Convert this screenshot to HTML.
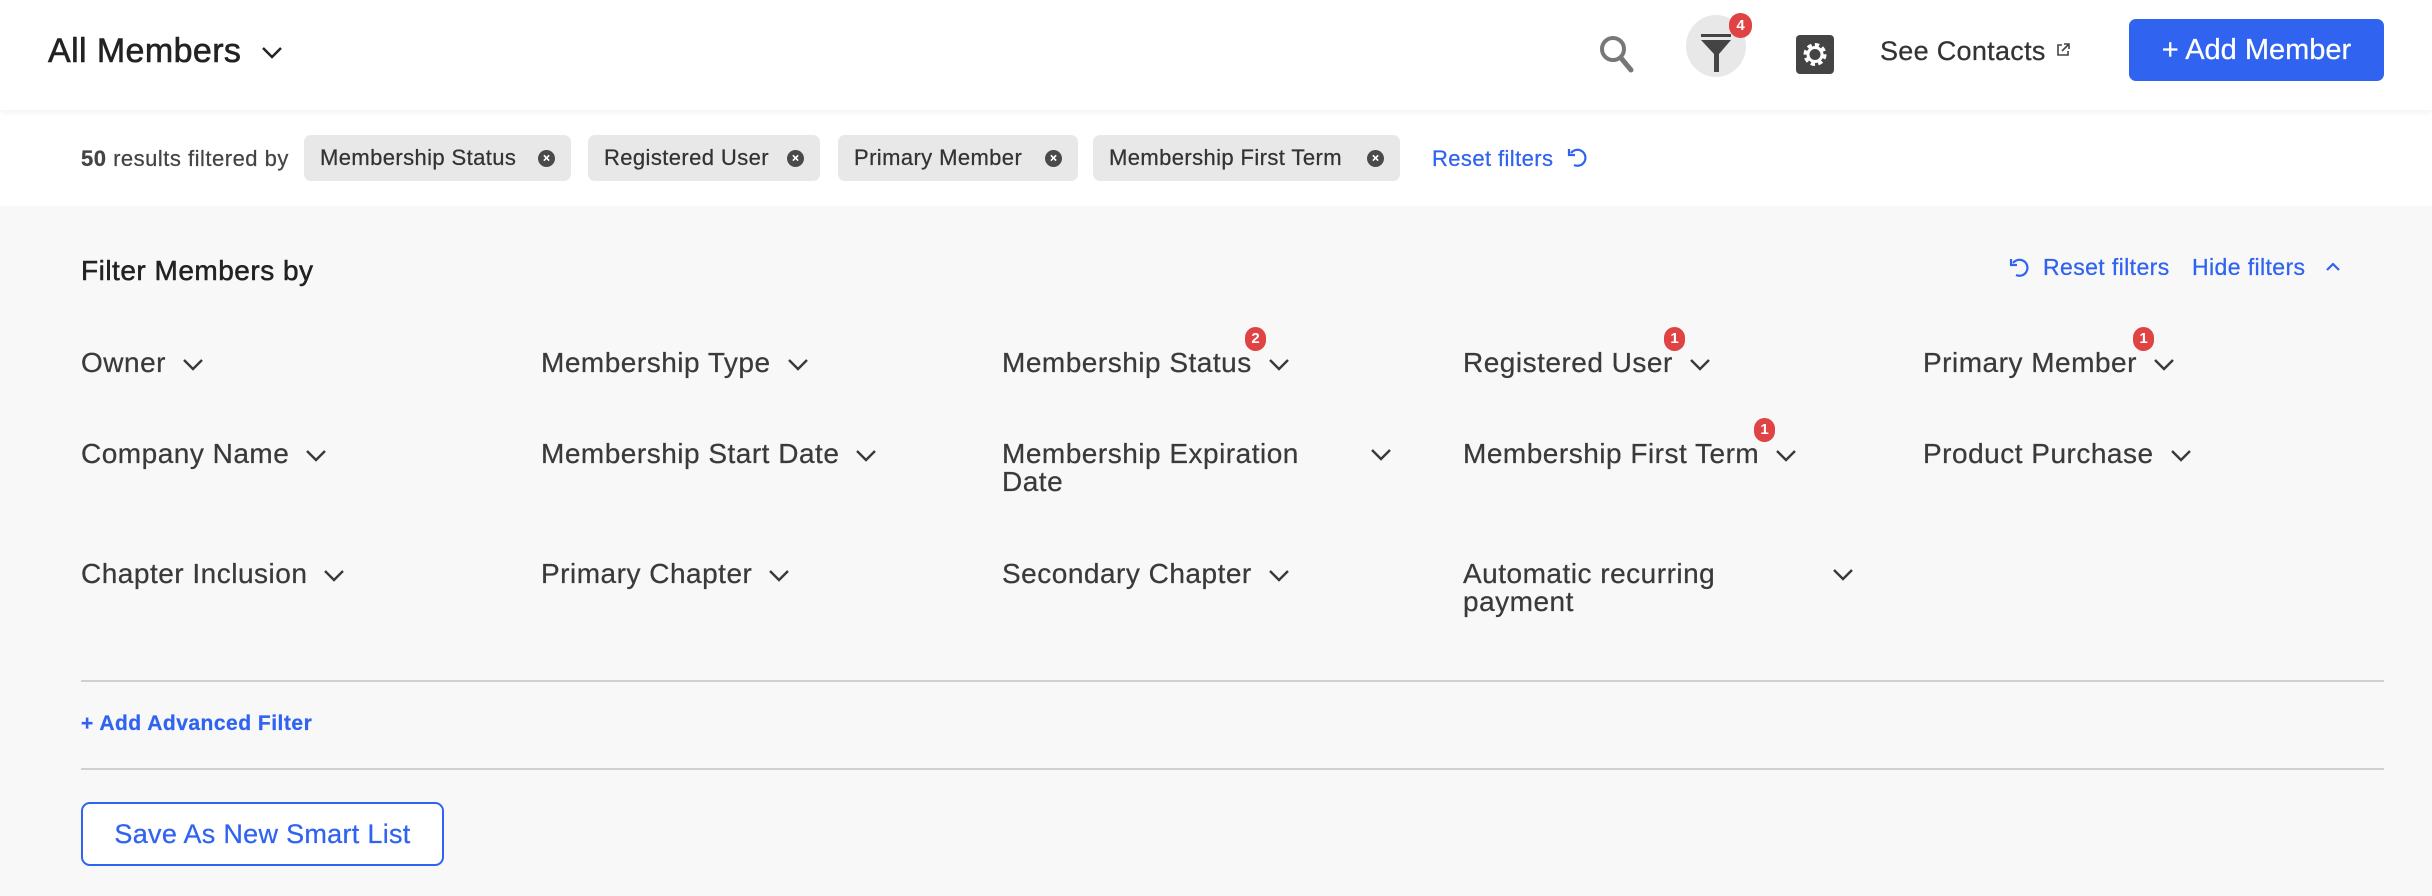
<!DOCTYPE html>
<html><head><meta charset="utf-8"><style>
*{box-sizing:border-box;margin:0;padding:0}
body{width:2432px;height:896px;overflow:hidden;background:#f8f8f8;font-family:"Liberation Sans",sans-serif;position:relative;color:#333;-webkit-text-stroke:0.25px}
.top{position:absolute;left:0;top:0;width:2432px;height:110px;background:#fff;box-shadow:0 2px 6px rgba(0,0,0,.06);z-index:2}
.sub{position:absolute;left:0;top:110px;width:2432px;height:96px;background:#fff}
.a{position:absolute;white-space:nowrap}
.chip{position:absolute;top:135px;height:46px;background:#e8e8e8;border-radius:7px;font-size:22px;letter-spacing:0.4px;color:#333;display:flex;align-items:center;padding-left:16px}
.x{position:absolute;right:16px;top:15px;width:17px;height:17px;border-radius:50%;background:#4a4a4a;color:#fff;font-size:12px;line-height:17px;text-align:center;font-weight:bold;letter-spacing:0}
.lbl{position:absolute;font-size:28px;letter-spacing:0.5px;color:#3a3a3a;line-height:28px}
.chev{display:inline-block;vertical-align:middle;margin-left:16px}
.bd{position:absolute;width:21px;height:24px;border-radius:12px;background:#e04343;color:#fff;font-size:15px;font-weight:bold;text-align:center;line-height:24px;-webkit-text-stroke:0}
.blue{color:#2f63f0}
</style></head><body>
<div class="top">
 <div class="a" style="left:48px;top:32px;font-size:34px;letter-spacing:0.4px;color:#222;-webkit-text-stroke:0.6px">All Members</div>
 <svg class="a" style="left:260px;top:45px" width="24" height="16" viewBox="0 0 24 16"><polyline points="3,3 12,12 21,3" fill="none" stroke="#222" stroke-width="2.5"/></svg>
 <svg class="a" style="left:1598px;top:34px" width="38" height="40" viewBox="0 0 38 40"><circle cx="15" cy="15" r="11" fill="none" stroke="#777" stroke-width="4"/><line x1="23" y1="24" x2="33" y2="36" stroke="#777" stroke-width="5" stroke-linecap="round"/></svg>
 <div class="a" style="left:1686px;top:15px;width:60px;height:62px;border-radius:50%;background:#e8e8e8"></div>
 <svg class="a" style="left:1699px;top:32px" width="34" height="42" viewBox="0 0 34 42"><rect x="2" y="2" width="30" height="3" fill="#444"/><path d="M2 8 H32 L20 22 V40 L15 40 V22 Z" fill="#444"/></svg>
 <div class="bd" style="left:1729px;top:13px;width:23px;height:25px;line-height:25px;border-radius:12px">4</div>
 <svg class="a" style="left:1796px;top:35px" width="38" height="39" viewBox="0 0 38 39"><rect x="0" y="0" width="38" height="39" rx="4" fill="#444"/><circle cx="19" cy="19.5" r="9" fill="none" stroke="#fff" stroke-width="5" stroke-dasharray="4 3"/><circle cx="19" cy="19.5" r="7" fill="none" stroke="#fff" stroke-width="3"/></svg>
 <div class="a" style="left:1880px;top:36px;font-size:27px;letter-spacing:0.3px;color:#333">See Contacts</div>
 <svg class="a" style="left:2055px;top:42px" width="16" height="16" viewBox="0 0 16 16"><path d="M7 3H3v10h10V9M9 2h5v5M14 2 7 9" fill="none" stroke="#444" stroke-width="1.6"/></svg>
 <div class="a" style="left:2129px;top:19px;width:255px;height:62px;background:#2f63f0;border-radius:7px;color:#fff;font-size:29px;text-align:center;line-height:62px">+ Add Member</div>
</div>
<div class="sub">
 <div class="a" style="left:81px;top:36px;font-size:22px;letter-spacing:0.5px;color:#444"><b>50</b> results filtered by</div>
 <div class="a blue" style="left:1432px;top:36px;font-size:22px;letter-spacing:0.4px">Reset filters</div>
 <svg class="a" style="left:1566px;top:36px" width="24" height="24" viewBox="0 0 24 24"><path d="M5 7 A8 8 0 1 1 8 19" fill="none" stroke="#2f63f0" stroke-width="2.2"/><path d="M3 3 V9 H9" fill="none" stroke="#2f63f0" stroke-width="2.2"/></svg>
</div>
<div class="chip" style="left:304px;width:267px">Membership Status<span class="x">×</span></div>
<div class="chip" style="left:588px;width:232px">Registered User<span class="x">×</span></div>
<div class="chip" style="left:838px;width:240px">Primary Member<span class="x">×</span></div>
<div class="chip" style="left:1093px;width:307px">Membership First Term<span class="x">×</span></div>

<div class="a" style="left:81px;top:255px;font-size:28px;letter-spacing:0.5px;color:#222;-webkit-text-stroke:0.5px">Filter Members by</div>
<svg class="a" style="left:2008px;top:256px" width="24" height="24" viewBox="0 0 24 24"><path d="M5 7 A8 8 0 1 1 8 19" fill="none" stroke="#2f63f0" stroke-width="2.2"/><path d="M3 3 V9 H9" fill="none" stroke="#2f63f0" stroke-width="2.2"/></svg>
<div class="a blue" style="left:2043px;top:254px;font-size:23px;letter-spacing:0.4px">Reset filters</div>
<div class="a blue" style="left:2192px;top:254px;font-size:23px;letter-spacing:0.4px">Hide filters</div>
<svg class="a" style="left:2324px;top:260px" width="18" height="14" viewBox="0 0 18 14"><polyline points="3,10 9,4 15,10" fill="none" stroke="#2f63f0" stroke-width="2.2"/></svg>

<!-- row 1 -->
<div class="lbl" style="left:81px;top:349px">Owner<svg class="chev" width="22" height="14" viewBox="0 0 22 14"><polyline points="2,2 11,11 20,2" fill="none" stroke="#3a3a3a" stroke-width="2.4"/></svg></div>
<div class="lbl" style="left:541px;top:349px">Membership Type<svg class="chev" width="22" height="14" viewBox="0 0 22 14"><polyline points="2,2 11,11 20,2" fill="none" stroke="#3a3a3a" stroke-width="2.4"/></svg></div>
<div class="lbl" style="left:1002px;top:349px">Membership Status<svg class="chev" width="22" height="14" viewBox="0 0 22 14"><polyline points="2,2 11,11 20,2" fill="none" stroke="#3a3a3a" stroke-width="2.4"/></svg></div>
<div class="bd" style="left:1245px;top:327px">2</div>
<div class="lbl" style="left:1463px;top:349px">Registered User<svg class="chev" width="22" height="14" viewBox="0 0 22 14"><polyline points="2,2 11,11 20,2" fill="none" stroke="#3a3a3a" stroke-width="2.4"/></svg></div>
<div class="bd" style="left:1664px;top:327px">1</div>
<div class="lbl" style="left:1923px;top:349px">Primary Member<svg class="chev" width="22" height="14" viewBox="0 0 22 14"><polyline points="2,2 11,11 20,2" fill="none" stroke="#3a3a3a" stroke-width="2.4"/></svg></div>
<div class="bd" style="left:2133px;top:327px">1</div>
<!-- row 2 -->
<div class="lbl" style="left:81px;top:440px">Company Name<svg class="chev" width="22" height="14" viewBox="0 0 22 14"><polyline points="2,2 11,11 20,2" fill="none" stroke="#3a3a3a" stroke-width="2.4"/></svg></div>
<div class="lbl" style="left:541px;top:440px">Membership Start Date<svg class="chev" width="22" height="14" viewBox="0 0 22 14"><polyline points="2,2 11,11 20,2" fill="none" stroke="#3a3a3a" stroke-width="2.4"/></svg></div>
<div class="lbl" style="left:1002px;top:440px">Membership Expiration<br>Date</div>
<svg class="a" style="left:1370px;top:448px" width="22" height="14" viewBox="0 0 22 14"><polyline points="2,2 11,11 20,2" fill="none" stroke="#3a3a3a" stroke-width="2.4"/></svg>
<div class="lbl" style="left:1463px;top:440px">Membership First Term<svg class="chev" width="22" height="14" viewBox="0 0 22 14"><polyline points="2,2 11,11 20,2" fill="none" stroke="#3a3a3a" stroke-width="2.4"/></svg></div>
<div class="bd" style="left:1754px;top:418px">1</div>
<div class="lbl" style="left:1923px;top:440px">Product Purchase<svg class="chev" width="22" height="14" viewBox="0 0 22 14"><polyline points="2,2 11,11 20,2" fill="none" stroke="#3a3a3a" stroke-width="2.4"/></svg></div>
<!-- row 3 -->
<div class="lbl" style="left:81px;top:560px">Chapter Inclusion<svg class="chev" width="22" height="14" viewBox="0 0 22 14"><polyline points="2,2 11,11 20,2" fill="none" stroke="#3a3a3a" stroke-width="2.4"/></svg></div>
<div class="lbl" style="left:541px;top:560px">Primary Chapter<svg class="chev" width="22" height="14" viewBox="0 0 22 14"><polyline points="2,2 11,11 20,2" fill="none" stroke="#3a3a3a" stroke-width="2.4"/></svg></div>
<div class="lbl" style="left:1002px;top:560px">Secondary Chapter<svg class="chev" width="22" height="14" viewBox="0 0 22 14"><polyline points="2,2 11,11 20,2" fill="none" stroke="#3a3a3a" stroke-width="2.4"/></svg></div>
<div class="lbl" style="left:1463px;top:560px">Automatic recurring<br>payment</div>
<svg class="a" style="left:1832px;top:568px" width="22" height="14" viewBox="0 0 22 14"><polyline points="2,2 11,11 20,2" fill="none" stroke="#3a3a3a" stroke-width="2.4"/></svg>

<div class="a" style="left:81px;top:680px;width:2303px;height:2px;background:#d0d0d0"></div>
<div class="a blue" style="left:81px;top:712px;font-size:21px;letter-spacing:0.5px;font-weight:bold">+ Add Advanced Filter</div>
<div class="a" style="left:81px;top:768px;width:2303px;height:2px;background:#d0d0d0"></div>
<div class="a blue" style="left:81px;top:802px;width:363px;height:64px;border:2px solid #2f63f0;border-radius:9px;background:#fff;font-size:27px;letter-spacing:0.3px;text-align:center;line-height:60px">Save As New Smart List</div>
</body></html>
